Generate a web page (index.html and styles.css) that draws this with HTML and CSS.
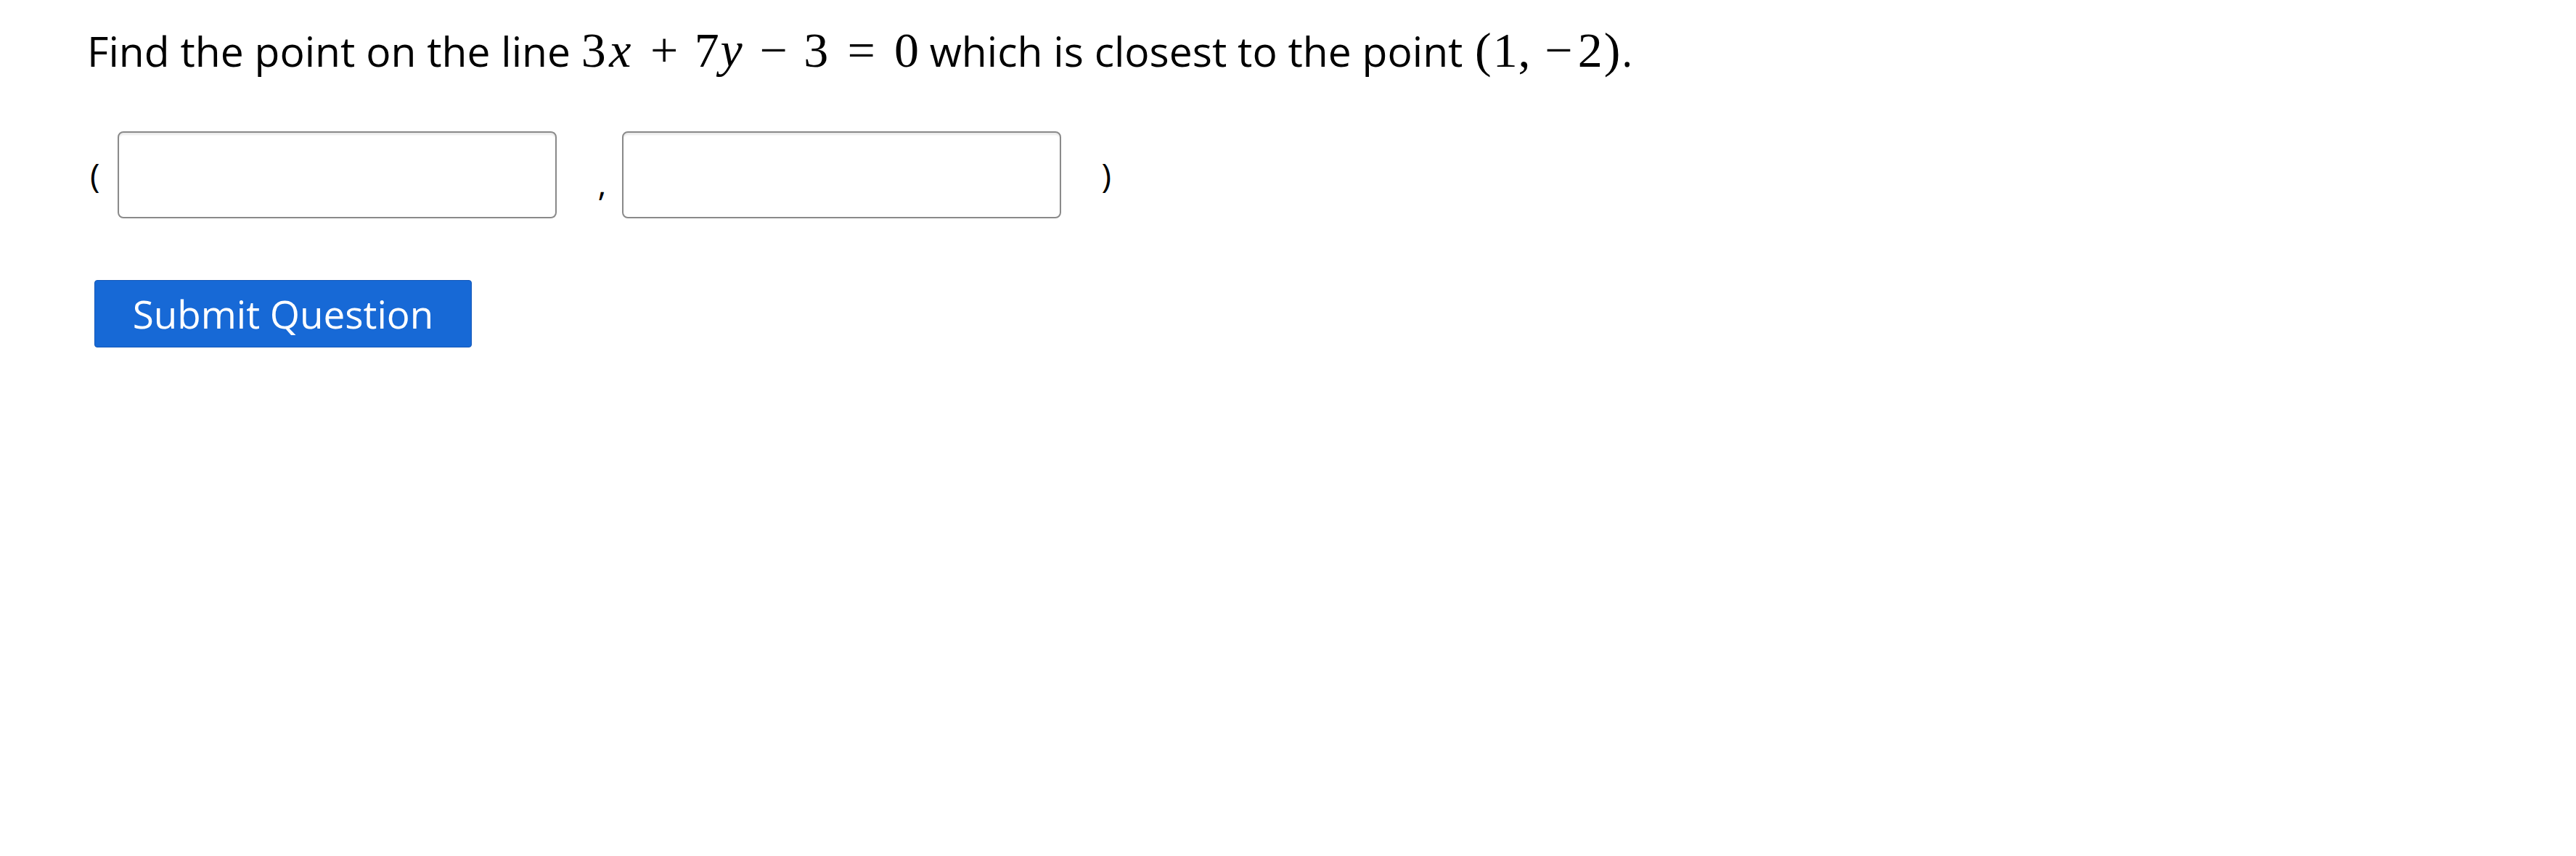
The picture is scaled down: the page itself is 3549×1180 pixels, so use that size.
FILE: index.html
```html
<!DOCTYPE html>
<html>
<head>
<meta charset="utf-8">
<link rel="stylesheet" href="styles.css">
</head>
<body>
<div class="question">
  <p class="prompt">Find the point on the line <span class="math"><span class="mn">3</span><span class="mi mi-x">x</span><span class="mo">+</span><span class="mn">7</span><span class="mi mi-y">y</span><span class="mo">&minus;</span><span class="mn">3</span><span class="mo mo-rel">=</span><span class="mn">0</span></span> which is closest to the point <span class="math"><span class="mp">(</span><span class="mn">1</span><span class="mpunct">,</span><span class="mn mn-neg">&minus;</span><span class="mn">2</span><span class="mp">)</span></span>.</p>
  <div class="answer-row">
    <span class="paren paren-open">(</span>
    <input class="answer-box" type="text">
    <span class="comma">,</span>
    <input class="answer-box" type="text">
    <span class="paren paren-close">)</span>
  </div>
  <button class="submit-btn" type="button">Submit Question</button>
</div>
</body>
</html>
```
FILE: styles.css
```css
html, body {
  margin: 0;
  padding: 0;
  background: #ffffff;
}
body {
  font-family: "Open Sans", "Noto Sans", sans-serif;
  color: #000000;
}
.question {
  padding: 34px 0 0 120px;
}
.prompt {
  margin: 0;
  font-size: 57px;
  line-height: 70px;
  white-space: nowrap;
}
.math {
  font-family: "Liberation Serif", "DejaVu Serif", serif;
  font-size: 68px;
  white-space: nowrap;
}
.math > span {
  display: inline-block;
  text-align: center;
}
.mn { width: 0.5em; }
.mi { font-style: italic; }
.mi-x { width: 0.572em; }
.mi-y { width: 0.49em; }
.mo { width: 0.778em; margin: 0 0.222em; }
.mo-rel { margin: 0 0.278em; }
.mp { width: 0.389em; }
.mpunct { width: 0.278em; margin-right: 0.167em; }
.mn-neg { width: 0.778em; }
.answer-row {
  display: flex;
  align-items: center;
  margin-top: 76px;
  font-size: 46px;
}
.paren {
  line-height: 60px;
}
.paren-open {
  margin-right: 24px;
  margin-left: 4px;
}
.paren-close {
  margin-left: 55px;
}
.comma {
  margin: 0 22px 0 57px;
  padding-top: 22px;
  line-height: 60px;
}
.answer-box {
  box-sizing: border-box;
  width: 605px;
  height: 120px;
  margin: 0;
  border: 2px solid #8a8a8a;
  border-radius: 8px;
  background: #ffffff;
  box-shadow: inset 0 3px 2px rgba(0,0,0,0.08);
  font-size: 46px;
  padding: 0 16px;
}
.submit-btn {
  display: block;
  box-sizing: border-box;
  margin: 85px 0 0 10px;
  width: 520px;
  height: 93px;
  padding: 0;
  border: 1px solid #1458b8;
  border-radius: 4px;
  background: #1769d6;
  color: #ffffff;
  font-family: "Open Sans", "Noto Sans", sans-serif;
  font-size: 53px;
}
```
